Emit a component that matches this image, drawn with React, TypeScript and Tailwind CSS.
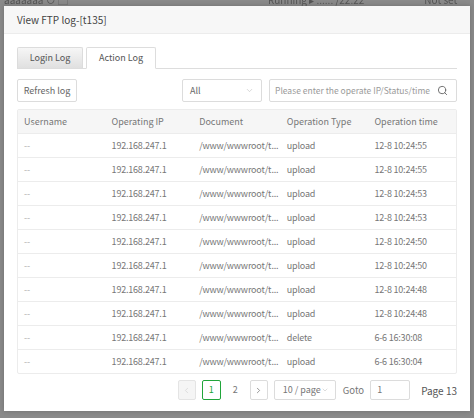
import React from 'react';
import { ChevronDown, ChevronLeft, ChevronRight, Search } from 'lucide-react';

const rows = [
  ['12-8 10:24:55', 'upload'],
  ['12-8 10:24:55', 'upload'],
  ['12-8 10:24:53', 'upload'],
  ['12-8 10:24:53', 'upload'],
  ['12-8 10:24:50', 'upload'],
  ['12-8 10:24:50', 'upload'],
  ['12-8 10:24:48', 'upload'],
  ['12-8 10:24:48', 'upload'],
  ['6-6 16:30:08', 'delete'],
  ['6-6 16:30:04', 'upload'],
];

const cols = ['Username', 'Operating IP', 'Document', 'Operation Type', 'Operation time'];

export default function App() {
  return (
    <div
      className="relative w-[474px] h-[418px] overflow-hidden bg-[#8a8a8a] text-[#666]"
      style={{ fontFamily: '"Noto Sans CJK SC", "Open Sans", sans-serif' }}
    >
      {/* page behind the mask */}
      <div className="flex pl-1 -mt-[8px] text-[10px] text-[#555] whitespace-nowrap blur-[0.4px]">
        <span>aaaaaaa ⊙ ▢</span>
        <span className="ml-[200px]">Running ▸ ...... /22:22</span>
        <span className="ml-[60px]">Not set</span>
        <span className="ml-[50px]">22:22</span>
      </div>

      <div className="absolute left-[4px] top-[6px] w-[466px] h-[405px] bg-white shadow-[0_0_5px_rgba(0,0,0,0.2)] flex flex-col">
        <div className="h-[28px] shrink-0 bg-[#f7f7f7] border-b border-[#ececec] flex items-center px-[13px] text-[10px] text-[#444]">
          View FTP log-[t135]
        </div>

        <div className="flex flex-col px-[13px] pt-[13px]">
          {/* tabs */}
          <div className="flex items-end border-b border-[#ddd] h-[22px]">
            <div className="h-[21px] w-[66px] flex items-center justify-center text-[9px] text-[#555] bg-gradient-to-b from-[#f6f6f6] to-[#e0e0e0] border border-[#dcdcdc] border-b-0 rounded-t-[2px]">
              Login Log
            </div>
            <div className="ml-[3px] h-[22px] w-[70px] -mb-px flex items-center justify-center text-[9px] text-[#555] bg-white border border-[#ddd] border-b-white rounded-t-[2px]">
              Action Log
            </div>
          </div>

          {/* toolbar */}
          <div className="flex items-center mt-[10px] h-[23px]">
            <div className="h-[23px] w-[60px] flex items-center justify-center border border-[#dcdcdc] rounded-[2px] text-[9px] text-[#666] whitespace-nowrap">
              Refresh log
            </div>
            <div className="ml-auto h-[23px] w-[80px] flex items-center justify-between px-[7px] border border-[#dcdcdc] rounded-[2px] text-[9px] text-[#666]">
              <span>All</span>
              <ChevronDown className="w-[9px] h-[9px] text-[#bbb]" strokeWidth={1.5} />
            </div>
            <div className="ml-[7px] h-[23px] w-[188px] flex items-center justify-between pl-[5px] pr-[8px] border border-[#dcdcdc] rounded-[2px] text-[8.5px] text-[#9a9a9a]">
              <span className="whitespace-nowrap">Please enter the operate IP/Status/time</span>
              <Search className="w-[11px] h-[11px] text-[#666] shrink-0" strokeWidth={2} />
            </div>
          </div>

          {/* table */}
          <div className="mt-[7px] border border-[#ececec] rounded-[2px]">
            <div className="grid grid-cols-5 h-[23px] items-center bg-[#f6f6f6] text-[9px] text-[#777]">
              {cols.map((c) => (
                <div key={c} className="px-[6px] whitespace-nowrap">{c}</div>
              ))}
            </div>
            {rows.map(([t, op], i) => (
              <div key={i} className="grid grid-cols-5 h-[24px] items-center border-t border-[#ececec] text-[9px] text-[#777] tracking-[-0.2px]">
                <div className="px-[6px] text-[#b0b0b0]">--</div>
                <div className="px-[6px]">192.168.247.1</div>
                <div className="px-[6px] whitespace-nowrap">/www/wwwroot/t...</div>
                <div className="px-[6px]">{op}</div>
                <div className="px-[6px] whitespace-nowrap">{t}</div>
              </div>
            ))}
          </div>

          {/* pagination */}
          <div className="flex items-center justify-end mt-[6px] h-[20px] text-[9px] text-[#777]">
            <div className="w-[18px] h-[20px] flex items-center justify-center border border-[#e4e4e4] bg-[#f5f5f5] rounded-[2px]">
              <ChevronLeft className="w-[9px] h-[9px] text-[#ccc]" strokeWidth={1.5} />
            </div>
            <div className="ml-[6px] w-[19px] h-[20px] flex items-center justify-center border border-[#20a53a] rounded-[2px] text-[#20a53a]">
              1
            </div>
            <div className="w-[29px] text-center">2</div>
            <div className="w-[18px] h-[20px] flex items-center justify-center border border-[#dcdcdc] rounded-[2px]">
              <ChevronRight className="w-[9px] h-[9px] text-[#666]" strokeWidth={1.8} />
            </div>
            <div className="ml-[6px] w-[62px] h-[20px] flex items-center justify-between pl-[8px] pr-[6px] border border-[#dcdcdc] rounded-[2px]">
              <span className="whitespace-nowrap">10 / page</span>
              <ChevronDown className="w-[8px] h-[8px] text-[#bbb]" strokeWidth={1.5} />
            </div>
            <span className="ml-[7px] text-[9.5px]">Goto</span>
            <div className="ml-[6px] w-[40px] h-[20px] flex items-center px-[6px] border border-[#dcdcdc] rounded-[2px]">
              1
            </div>
            <span className="ml-[11px] text-[10px] text-[#555] whitespace-nowrap">Page 13</span>
          </div>
        </div>
      </div>
    </div>
  );
}
